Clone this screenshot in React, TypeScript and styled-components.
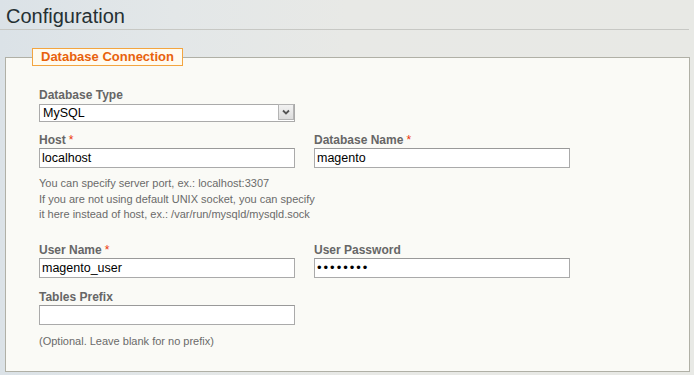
import React from "react";
import styled, { createGlobalStyle } from "styled-components";

const GlobalStyle = createGlobalStyle`
  html, body {
    margin: 0;
    padding: 0;
  }
  body {
    background: linear-gradient(90deg, #dbe2e7 0%, #e3e7e8 25%, #e8e9e6 50%, #e8e9e5 100%);
    font-family: "Liberation Sans", Arial, sans-serif;
    min-height: 375px;
  }
`;

const Header = styled.div`
  height: 29px;
  margin-right: 5px;
  border-bottom: 1px solid #c7c8c4;
`;

const Title = styled.h3`
  margin: 0;
  padding: 4px 0 0 6px;
  font-size: 20px;
  line-height: 24px;
  font-weight: normal;
  color: #253033;
`;

const Fieldset = styled.fieldset`
  margin: 18px 4px 0 5px;
  padding: 0;
  min-width: 0;
  border: 1px solid #b0b0a6;
  background: #fafaf6;
`;

const Legend = styled.legend`
  margin-left: 26px;
  padding: 0 8px;
  height: 18px;
  box-sizing: border-box;
  line-height: 16px;
  border: 1px solid #f3a540;
  background: #fffbf0;
  color: #e8620c;
  font-size: 13px;
  font-weight: bold;
`;

const Body = styled.div`
  padding: 22px 20px 22px 33px;
`;

const Row = styled.div<{ $top?: number }>`
  display: grid;
  grid-template-columns: 275px 256px;
  margin-top: ${(p) => p.$top ?? 0}px;
`;

const Field = styled.div`
  display: flex;
  flex-direction: column;
`;

const Label = styled.label`
  font-size: 12px;
  line-height: 15px;
  font-weight: bold;
  color: #666;
`;

const Required = styled.span`
  color: #eb340a;
  font-weight: normal;
  margin-left: 3px;
`;

const TextInput = styled.input<{ $secret?: boolean }>`
  box-sizing: border-box;
  width: 256px;
  height: 20px;
  margin: 0;
  padding: 0 2px;
  border: 1px solid #aaa;
  border-top-color: #999;
  background: #fff;
  font-family: "Liberation Sans", Arial, sans-serif;
  font-size: ${(p) => (p.$secret ? "13px" : "12.5px")};
  letter-spacing: ${(p) => (p.$secret ? "2px" : "0")};
  color: #000;
  outline: none;
`;

const SelectWrap = styled.div`
  position: relative;
  width: 256px;
  height: 18px;
`;

const Select = styled.select`
  appearance: none;
  box-sizing: border-box;
  width: 100%;
  height: 100%;
  margin: 0;
  padding: 0 20px 0 3px;
  border: 1px solid #aaa;
  border-radius: 0;
  background: #fff;
  font-family: "Liberation Sans", Arial, sans-serif;
  font-size: 12.5px;
  color: #000;
  outline: none;
`;

const ArrowBox = styled.span`
  position: absolute;
  top: 1px;
  right: 1px;
  bottom: 1px;
  width: 16px;
  box-sizing: border-box;
  border: 1px solid #b4b4b4;
  background: linear-gradient(#f2f2f2, #dcdcdc);
  display: flex;
  align-items: center;
  justify-content: center;
  pointer-events: none;
`;

const Note = styled.div<{ $top: number }>`
  margin-top: ${(p) => p.$top}px;
  font-size: 11px;
  line-height: 15.5px;
  color: #6a6a6a;
`;

const Chevron = () => (
  <svg width="8" height="6" viewBox="0 0 8 6">
    <path d="M1 1.5 L4 4.5 L7 1.5" fill="none" stroke="#555" strokeWidth="1.8" />
  </svg>
);

const Req = () => <Required>*</Required>;

const App = () => {
  return (
    <>
      <GlobalStyle />
      <Header>
        <Title>Configuration</Title>
      </Header>
      <Fieldset>
        <Legend>Database Connection</Legend>
        <Body>
          <Row>
            <Field>
              <Label>Database Type</Label>
              <SelectWrap>
                <Select defaultValue="mysql">
                  <option value="mysql">MySQL</option>
                </Select>
                <ArrowBox>
                  <Chevron />
                </ArrowBox>
              </SelectWrap>
            </Field>
          </Row>
          <Row $top={12}>
            <Field>
              <Label>
                Host<Req />
              </Label>
              <TextInput defaultValue="localhost" />
            </Field>
            <Field>
              <Label>
                Database Name<Req />
              </Label>
              <TextInput defaultValue="magento" />
            </Field>
          </Row>
          <Note $top={8}>
            You can specify server port, ex.: localhost:3307
            <br />
            If you are not using default UNIX socket, you can specify
            <br />
            it here instead of host, ex.: /var/run/mysqld/mysqld.sock
          </Note>
          <Row $top={20}>
            <Field>
              <Label>
                User Name<Req />
              </Label>
              <TextInput defaultValue="magento_user" />
            </Field>
            <Field>
              <Label>User Password</Label>
              <TextInput $secret type="password" defaultValue="magento1" />
            </Field>
          </Row>
          <Row $top={12}>
            <Field>
              <Label>Tables Prefix</Label>
              <TextInput defaultValue="" />
            </Field>
          </Row>
          <Note $top={9}>(Optional. Leave blank for no prefix)</Note>
        </Body>
      </Fieldset>
    </>
  );
};

export default App;
